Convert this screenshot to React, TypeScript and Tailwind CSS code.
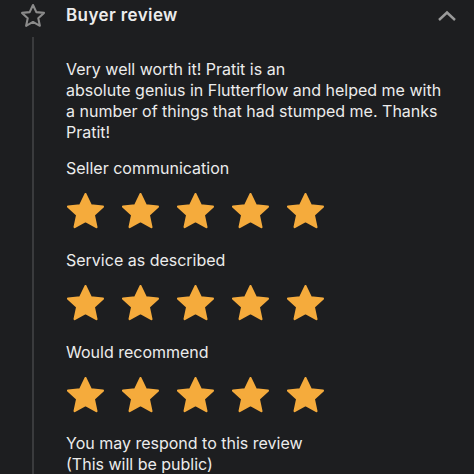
const STAR = "M12 2.6l2.85 6.05 6.55.7-4.9 4.5 1.38 6.55L12 17.1l-5.88 3.3 1.38-6.55-4.9-4.5 6.55-.7z";

function FilledStar() {
  return (
    <svg width="37" height="37" viewBox="2 2 20 20" className="shrink-0">
      <path d={STAR} fill="#f5ab3c" stroke="#f5ab3c" strokeWidth="1.2" strokeLinejoin="round" />
    </svg>
  );
}

function StarRow() {
  return (
    <div className="flex gap-[18px] ml-[1px]">
      <FilledStar />
      <FilledStar />
      <FilledStar />
      <FilledStar />
      <FilledStar />
    </div>
  );
}

export default function App() {
  return (
    <div
      className="w-[474px] h-[474px] bg-[#1d1e20] overflow-hidden text-[#ececec]"
      style={{ fontFamily: "Inter, 'Noto Sans', sans-serif" }}
    >
      {/* header */}
      <div className="flex items-center h-[32px]">
        <div className="w-[66px] flex justify-center">
          <svg width="28" height="28" viewBox="0 0 24 24">
            <path d={STAR} fill="none" stroke="#8b8b8b" strokeWidth="1.8" strokeLinejoin="round" />
          </svg>
        </div>
        <h1 className="text-[17px] font-semibold tracking-[0.4px]">Buyer review</h1>
        <div className="ml-auto mr-[17px]">
          <svg width="20" height="12" viewBox="0 0 20 12">
            <path d="M2 10l8-7.5 8 7.5" fill="none" stroke="#9a9a9a" strokeWidth="2.4" />
          </svg>
        </div>
      </div>

      {/* body */}
      <div className="flex">
        <div className="w-[66px] flex justify-center pt-[5px]">
          <div className="w-[2px] h-[460px] bg-[#3a3b3d]" />
        </div>
        <div className="flex-1 pt-[27px] text-[16px] leading-[21px]">
          <p className="w-[380px]">
            Very well worth it! Pratit is an
            <br />
            absolute genius in Flutterflow and helped me with a number of things that had stumped me. Thanks Pratit!
          </p>
          <p className="mt-[15px]">Seller communication</p>
          <div className="mt-[14px]">
            <StarRow />
          </div>
          <p className="mt-[20px]">Service as described</p>
          <div className="mt-[14px]">
            <StarRow />
          </div>
          <p className="mt-[20px]">Would recommend</p>
          <div className="mt-[14px]">
            <StarRow />
          </div>
          <p className="mt-[19px]">
            You may respond to this review
            <br />
            (This will be public)
          </p>
        </div>
      </div>
    </div>
  );
}
